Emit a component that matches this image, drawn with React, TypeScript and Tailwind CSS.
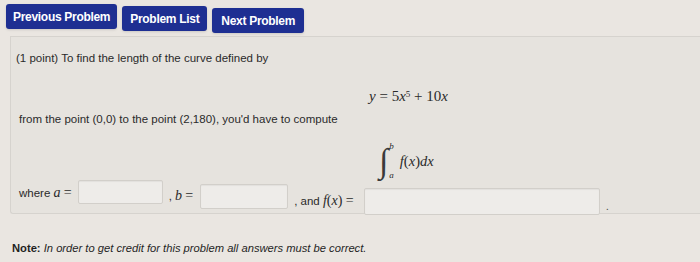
import React from "react";

const sans = { fontFamily: '"Liberation Sans", Arial, sans-serif' };
const serif = { fontFamily: '"Liberation Serif", "Times New Roman", serif' };

function NavButton({ label, offset }: { label: string; offset: string }) {
  return (
    <button
      className={`h-[25px] rounded-[3px] bg-[#1e2f92] text-[12px] font-bold tracking-tight text-white shadow-sm ${offset}`}
    >
      {label}
    </button>
  );
}

function AnswerBox({ className }: { className: string }) {
  return (
    <div
      className={`rounded-[2px] border border-[#d2cfca] bg-[#eeece9] shadow-[inset_0_1px_1px_rgba(0,0,0,0.05)] ${className}`}
    />
  );
}

function M({ children, italic }: { children: React.ReactNode; italic?: boolean }) {
  return (
    <span className={`text-[14px] ${italic ? "italic" : ""}`} style={serif}>
      {children}
    </span>
  );
}

export default function App() {
  return (
    <div
      className="relative h-[262px] w-[700px] overflow-hidden bg-[#eae6e1] text-[#2a2a2a]"
      style={sans}
    >
      <div className="flex items-start gap-[5px] pl-[6px] pt-[4px]">
        <NavButton label="Previous Problem" offset="px-[7px]" />
        <NavButton label="Problem List" offset="mt-[2px] px-[8px]" />
        <NavButton label="Next Problem" offset="mt-[4px] px-[9px]" />
      </div>

      <div className="ml-[10px] mt-[3px] h-[178px] rounded-bl-[3px] border-b border-l border-t border-[#d6d3ce] bg-[#e6e3de] pl-[5px] text-[11.5px]">
        <p className="pt-[14px] leading-[14px]">
          (1 point) To find the length of the curve defined by
        </p>

        <div className="ml-[353px] mt-[23px] text-[15px] italic leading-[16px]" style={serif}>
          y <span className="not-italic">= 5</span>x
          <sup className="text-[9px] not-italic">5</sup>
          <span className="not-italic"> + 10</span>x
        </div>

        <p className="ml-[3px] mt-[8px] leading-[14px]">
          from the point (0,0) to the point (2,180), you'd have to compute
        </p>

        <div className="ml-[363px] mt-[14px] flex items-center" style={serif}>
          <span className="text-[34px] italic leading-[42px] text-[#3a3a3a]">∫</span>
          <div className="ml-[1px] flex h-[42px] flex-col justify-between text-[9px] italic">
            <span>b</span>
            <span>a</span>
          </div>
          <span className="ml-[6px] mt-[2px] text-[14.5px] italic">
            f<span className="not-italic">(</span>x<span className="not-italic">)</span>dx
          </span>
        </div>

        <div className="-mt-[2px] flex items-start">
          <span className="ml-[3px] mt-[6px] leading-[14px]">
            where <M italic>a</M> <M>=</M>
          </span>
          <AnswerBox className="ml-[6px] h-[24px] w-[85px]" />
          <span className="ml-[6px] mt-[9px] leading-[14px]">
            , <M italic>b</M> <M>=</M>
          </span>
          <AnswerBox className="ml-[7px] mt-[4px] h-[25px] w-[88px]" />
          <span className="ml-[6px] mt-[14px] leading-[14px]">
            , and{" "}
            <M italic>f</M>
            <M>
              (<i>x</i>) =
            </M>
          </span>
          <AnswerBox className="ml-[10px] mt-[8px] h-[27px] w-[236px]" />
          <span className="ml-[6px] mt-[18px] text-[#555]">.</span>
        </div>
      </div>

      <p className="ml-[12px] mt-[27px] text-[11.2px] leading-[14px] text-[#1f1f1f]">
        <span className="font-bold">Note:</span>{" "}
        <i>In order to get credit for this problem all answers must be correct.</i>
      </p>
    </div>
  );
}
